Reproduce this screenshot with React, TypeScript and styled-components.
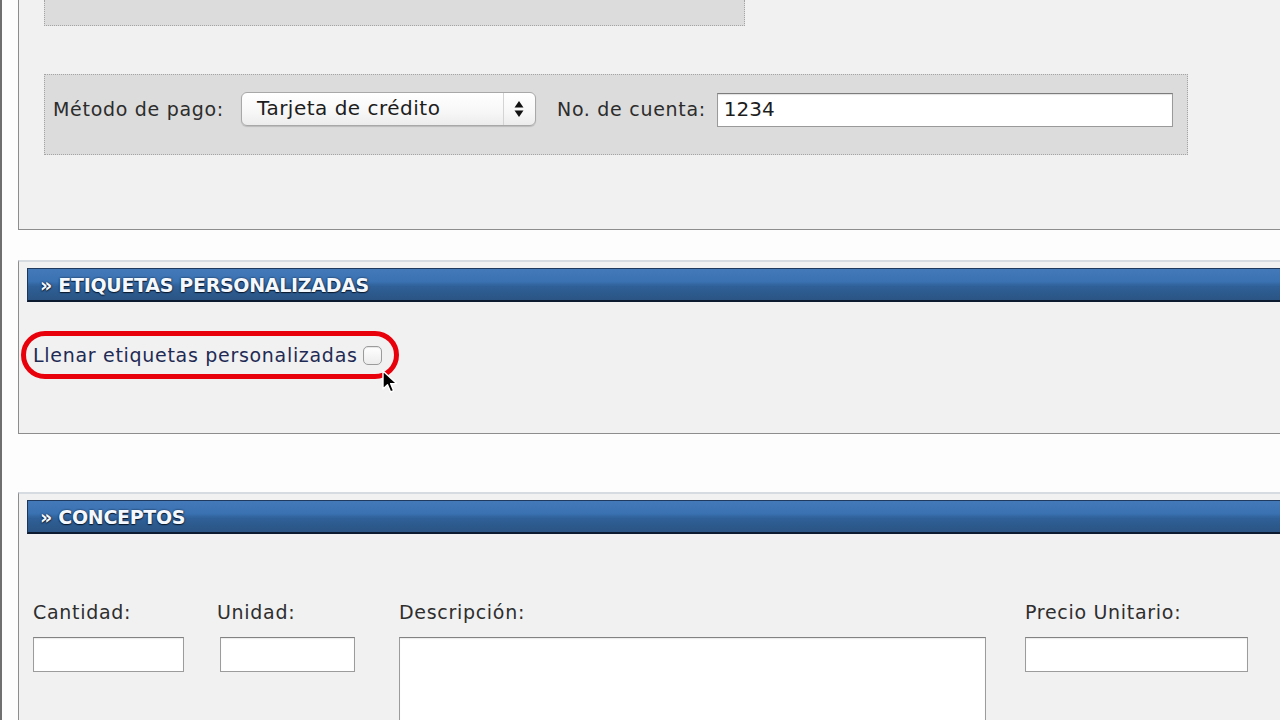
import styled, { createGlobalStyle } from 'styled-components';

const GlobalStyle = createGlobalStyle`
  html, body {
    margin: 0;
    padding: 0;
    background: #fdfdfd;
  }
  * {
    box-sizing: border-box;
  }
`;

const Page = styled.div`
  position: relative;
  width: 1280px;
  height: 720px;
  overflow: hidden;
  background: #fdfdfd;
  border-left: 2px solid #6f6f6f;
  padding-left: 16px;
  display: flex;
  flex-direction: column;
  font-family: 'DejaVu Sans', Verdana, sans-serif;
  color: #2b2b2b;
`;

const Panel = styled.section<{ $open?: boolean; $height: number; $gap: number }>`
  flex-shrink: 0;
  height: ${({ $height }) => $height}px;
  margin-top: ${({ $gap }) => $gap}px;
  margin-right: -4px;
  background: #f1f1f1;
  border-left: 1px solid #8d8d8d;
  border-bottom: 1px solid #8d8d8d;
  border-top: ${({ $open }) => ($open ? 'none' : '2px solid #d6dbe2')};
  padding: ${({ $open }) => ($open ? '0' : '6px 0 0 8px')};
`;

const HeaderBar = styled.h2`
  margin: 0;
  height: 34px;
  display: flex;
  align-items: center;
  padding-left: 12px;
  background: linear-gradient(
    to bottom,
    #4479b8 0%,
    #3a72b2 40%,
    #2f6098 56%,
    #2a5483 100%
  );
  border-top: 1px solid #1f3a5e;
  border-left: 1px solid #1c3657;
  border-bottom: 2px solid #0d1b30;
  color: #f4f8ff;
  font-family: 'DejaVu Sans', Verdana, sans-serif;
  font-weight: bold;
  font-size: 19px;
  letter-spacing: -0.3px;
  text-shadow: 0 1px 1px #0b1a2e, 0 0 2px #0b1a2e;
`;

const TopBody = styled.div`
  padding-left: 25px;
  display: flex;
  flex-direction: column;
`;

const DottedBox = styled.div<{ $width: number }>`
  width: ${({ $width }) => $width}px;
  background: #dcdcdc;
  border: 1px dotted #a4a4a4;
`;

const Stub = styled(DottedBox)`
  height: 26px;
  border-top: none;
`;

const PayBox = styled(DottedBox)`
  margin-top: 48px;
  height: 81px;
  display: flex;
  align-items: flex-start;
  padding: 17px 0 0 8px;
`;

const InlineLabel = styled.span<{ $gap: number }>`
  font-size: 19px;
  letter-spacing: 0.7px;
  line-height: 34px;
  color: #2c2c2c;
  margin-right: ${({ $gap }) => $gap}px;
`;

const Select = styled.div`
  width: 295px;
  height: 34px;
  margin-right: 21px;
  display: flex;
  align-items: center;
  border: 1px solid #a8a8a8;
  border-radius: 6px;
  background: linear-gradient(to bottom, #ffffff 0%, #f7f7f7 60%, #ececec 100%);
  box-shadow: 0 1px 1px rgba(0, 0, 0, 0.15);
  font-size: 20px;
  letter-spacing: 0.5px;
  color: #1d1d1d;
`;

const SelectValue = styled.span`
  flex: 1;
  padding-left: 15px;
  padding-bottom: 3px;
`;

const SelectArrows = styled.span`
  width: 32px;
  height: 100%;
  border-left: 1px solid #d4d4d4;
  display: flex;
  align-items: center;
  justify-content: center;
`;

const TextInput = styled.div<{ $width: number }>`
  width: ${({ $width }) => $width}px;
  height: 34px;
  margin-top: 1px;
  background: #ffffff;
  border: 1px solid #9a9a9a;
  border-top-color: #7c7c7c;
  box-shadow: inset 0 1px 1px rgba(0, 0, 0, 0.12);
  font-size: 20px;
  line-height: 30px;
  color: #1d1d1d;
  padding-left: 6px;
`;

const CheckRow = styled.div`
  position: relative;
  margin-top: 42px;
  margin-left: 6px;
  display: flex;
  align-items: center;
  height: 22px;
`;

const CheckLabel = styled.span`
  font-size: 19px;
  letter-spacing: 0.7px;
  color: #1f2b55;
`;

const Checkbox = styled.span`
  margin-left: 5px;
  width: 19px;
  height: 19px;
  border: 1px solid #9b9b9b;
  border-radius: 5px;
  background: linear-gradient(to bottom, #ffffff, #ececec);
  box-shadow: inset 0 1px 1px rgba(0, 0, 0, 0.1);
`;

const Highlight = styled.span`
  position: absolute;
  left: -12px;
  top: -13px;
  width: 378px;
  height: 48px;
  border: 5px solid #e8000b;
  border-radius: 24px;
  pointer-events: none;
`;

const Cursor = styled.svg`
  position: absolute;
  left: 348px;
  top: 26px;
`;

const FieldsRow = styled.div`
  margin-top: 67px;
  padding-left: 6px;
  display: flex;
  align-items: flex-start;
`;

const Field = styled.div<{ $width: number; $gap: number }>`
  width: ${({ $width }) => $width}px;
  margin-right: ${({ $gap }) => $gap}px;
  display: flex;
  flex-direction: column;
  gap: 14px;
`;

const FieldLabel = styled.label`
  font-size: 19px;
  letter-spacing: 0.7px;
  line-height: 22px;
  color: #2e2e2e;
  white-space: nowrap;
`;

const Box = styled.div<{ $width: number; $height: number; $indent?: number }>`
  width: ${({ $width }) => $width}px;
  height: ${({ $height }) => $height}px;
  margin-left: ${({ $indent }) => $indent ?? 0}px;
  background: #ffffff;
  border: 1px solid #9c9c9c;
  border-top-color: #828282;
  box-shadow: inset 0 1px 1px rgba(0, 0, 0, 0.08);
`;

function Arrows() {
  return (
    <svg width="10" height="18" viewBox="0 0 10 18">
      <path d="M5 1 L9.5 7.5 H0.5 Z" fill="#111" />
      <path d="M5 17 L9.5 10.5 H0.5 Z" fill="#111" />
    </svg>
  );
}

export default function App() {
  return (
    <>
      <GlobalStyle />
      <Page>
        <Panel $open $height={230} $gap={0}>
          <TopBody>
            <Stub $width={701} />
            <PayBox $width={1144}>
              <InlineLabel $gap={17}>Método de pago:</InlineLabel>
              <Select>
                <SelectValue>Tarjeta de crédito</SelectValue>
                <SelectArrows>
                  <Arrows />
                </SelectArrows>
              </Select>
              <InlineLabel $gap={11}>No. de cuenta:</InlineLabel>
              <TextInput $width={456}>1234</TextInput>
            </PayBox>
          </TopBody>
        </Panel>

        <Panel $height={174} $gap={30}>
          <HeaderBar>» ETIQUETAS PERSONALIZADAS</HeaderBar>
          <CheckRow>
            <CheckLabel>Llenar etiquetas personalizadas</CheckLabel>
            <Checkbox />
            <Highlight />
            <Cursor width="20" height="26" viewBox="0 0 20 26">
              <path
                d="M2 1 L2 19 L6.5 14.8 L9.6 22 L12.6 20.7 L9.6 13.6 L15.6 13.6 Z"
                fill="#000"
                stroke="#fff"
                strokeWidth="1.4"
                strokeLinejoin="round"
              />
            </Cursor>
          </CheckRow>
        </Panel>

        <Panel $height={260} $gap={58}>
          <HeaderBar>» CONCEPTOS</HeaderBar>
          <FieldsRow>
            <Field $width={151} $gap={33}>
              <FieldLabel>Cantidad:</FieldLabel>
              <Box $width={151} $height={35} />
            </Field>
            <Field $width={138} $gap={44}>
              <FieldLabel>Unidad:</FieldLabel>
              <Box $width={135} $height={35} $indent={3} />
            </Field>
            <Field $width={587} $gap={39}>
              <FieldLabel>Descripción:</FieldLabel>
              <Box $width={587} $height={120} />
            </Field>
            <Field $width={223} $gap={0}>
              <FieldLabel>Precio Unitario:</FieldLabel>
              <Box $width={223} $height={35} />
            </Field>
          </FieldsRow>
        </Panel>
      </Page>
    </>
  );
}
